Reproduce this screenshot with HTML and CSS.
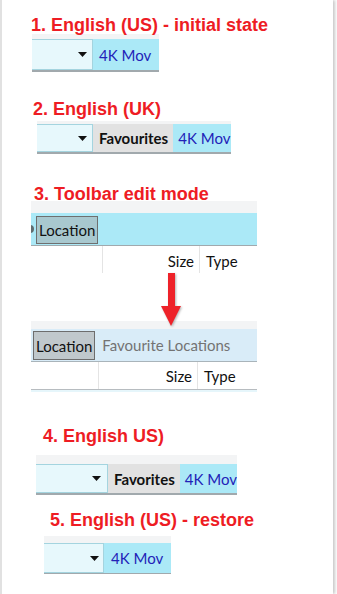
FILE: index.html
```html
<!DOCTYPE html>
<html lang="en">
<head>
    <meta charset="UTF-8">
    <meta name="viewport" content="width=device-width, initial-scale=1.0">
    <title>Toolbar language steps</title>
    <link rel="stylesheet" href="styles.css">
</head>
<body>
    <div class="sheet">
        <section class="step step-1">
            <h2 class="step-title">1. English (US) - initial state</h2>
            <div class="toolbar">
                <div class="band">
                    <div class="combo">
                        <svg class="combo-arrow" width="9" height="5" viewBox="0 0 9 5"><polygon points="0,0 9,0 4.5,5" fill="#111"/></svg>
                    </div>
                    <span class="link">4K Mov</span>
                </div>
            </div>
        </section>

        <section class="step step-2">
            <h2 class="step-title">2. English (UK)</h2>
            <div class="toolbar">
                <div class="band">
                    <div class="combo">
                        <svg class="combo-arrow" width="9" height="5" viewBox="0 0 9 5"><polygon points="0,0 9,0 4.5,5" fill="#111"/></svg>
                    </div>
                    <span class="fav">Favourites</span>
                    <span class="link">4K Mov</span>
                </div>
            </div>
        </section>

        <section class="step step-3">
            <h2 class="step-title">3. Toolbar edit mode</h2>
            <div class="toolbar toolbar-edit">
                <div class="band">
                    <span class="grip"></span>
                    <span class="loc-btn">Location</span>
                </div>
                <div class="cols">
                    <div class="col col-name"></div>
                    <div class="col col-size">Size</div>
                    <div class="col col-type">Type</div>
                </div>
            </div>

            <svg class="arrow" width="22" height="54" viewBox="0 0 22 54">
                <rect x="8" y="0" width="7" height="34" fill="#ee2229"/>
                <polygon points="1,33 21,33 11,53" fill="#ee2229"/>
            </svg>

            <div class="toolbar toolbar-after">
                <div class="band">
                    <span class="loc-btn">Location</span>
                    <span class="fav-loc">Favourite Locations</span>
                </div>
                <div class="cols">
                    <div class="col col-name"></div>
                    <div class="col col-size">Size</div>
                    <div class="col col-type">Type</div>
                </div>
            </div>
        </section>

        <section class="step step-4">
            <h2 class="step-title">4. English US)</h2>
            <div class="toolbar">
                <div class="band">
                    <div class="combo">
                        <svg class="combo-arrow" width="9" height="5" viewBox="0 0 9 5"><polygon points="0,0 9,0 4.5,5" fill="#111"/></svg>
                    </div>
                    <span class="fav">Favorites</span>
                    <span class="link">4K Mov</span>
                </div>
            </div>
        </section>

        <section class="step step-5">
            <h2 class="step-title">5. English (US) - restore</h2>
            <div class="toolbar">
                <div class="band">
                    <div class="combo">
                        <svg class="combo-arrow" width="9" height="5" viewBox="0 0 9 5"><polygon points="0,0 9,0 4.5,5" fill="#111"/></svg>
                    </div>
                    <span class="link">4K Mov</span>
                </div>
            </div>
        </section>
    </div>
</body>
</html>
```

FILE: styles.css
```css
:root {
    --title-red: #ee1c24;
    --strip-bg: #f3f4f5;
    --band-cyan: #abe9f7;
    --band-pale: #d9ecf8;
    --combo-bg: #e7f8fc;
    --combo-border: #a4d4df;
    --band-border: #a1a9ad;
    --link-blue: #2222b8;
}

* {
    margin: 0;
    padding: 0;
    box-sizing: border-box;
}

body {
    background-color: #fff;
    font-family: Lato, 'Open Sans', sans-serif;
}

.sheet {
    width: 333px;
    height: 594px;
    padding-top: 16px;
    border-left: 2px solid #e1e1e1;
    background-color: #fff;
    box-shadow: 2px 0 3px rgba(0, 0, 0, 0.22);
    overflow: hidden;
}

.step-title {
    font-family: 'Liberation Sans', Arial, sans-serif;
    font-size: 18px;
    font-weight: 700;
    line-height: 18px;
    color: var(--title-red);
    white-space: nowrap;
}

/* toolbar pieces */
.toolbar {
    background-color: var(--strip-bg);
    overflow: hidden;
}

.band {
    display: flex;
    align-items: stretch;
    background-color: var(--band-cyan);
    border-bottom: 2px solid var(--band-border);
    font-size: 15px;
    white-space: nowrap;
}

.band > * {
    flex-shrink: 0;
}

.combo {
    display: flex;
    align-items: center;
    justify-content: flex-end;
    background-color: var(--combo-bg);
    border: 1px solid var(--combo-border);
    border-left: none;
    padding-right: 5px;
}

.combo-arrow {
    display: block;
}

.link {
    display: flex;
    align-items: center;
    padding-left: 5px;
    color: var(--link-blue);
}

.fav {
    display: flex;
    align-items: center;
    padding: 0 5px 0 6px;
    background-color: #e2e2e2;
    font-weight: 700;
    color: #111;
}

.grip {
    width: 8px;
    height: 8px;
    margin: auto 0;
    margin-left: -5px;
    margin-right: 2px;
    border-radius: 50%;
    background-color: #5f6d70;
}

.loc-btn {
    display: flex;
    align-items: center;
    padding: 0 2px;
    border: 1px solid #6f6f6f;
    background-color: #a8c8cf;
    color: #111;
}

.fav-loc {
    display: flex;
    align-items: center;
    padding-left: 7px;
    color: #737373;
}

.cols {
    display: flex;
    height: 27px;
    background-color: #fff;
    font-size: 15px;
    color: #111;
    white-space: nowrap;
}

.col {
    padding-top: 6px;
    border-right: 1px solid #e4e4e4;
}

.col-size {
    text-align: right;
}

.col-type {
    border-right: none;
}

/* step 1 */
.step-1 .step-title { margin-left: 29px; }
.step-1 .toolbar { margin-left: 30px; width: 127px; padding-top: 5px; }
.step-1 .band { height: 33px; }
.step-1 .combo { width: 61px; }
.step-1 .link { padding-left: 6px; }

/* step 2 */
.step-2 { margin-top: 28px; }
.step-2 .step-title { margin-left: 31px; }
.step-2 .toolbar { margin-top: 3px; margin-left: 35px; width: 194px; padding-top: 3px; }
.step-2 .band { height: 30px; }
.step-2 .combo { width: 56px; }

/* step 3 */
.step-3 {
    position: relative;
    margin-top: 31px;
}
.step-3 .step-title { margin-left: 32px; }

.toolbar-edit {
    margin-top: -2px;
    margin-left: 29px;
    width: 226px;
    padding-top: 12px;
}
.toolbar-edit .band {
    height: 33px;
    border-bottom-width: 1px;
}
.toolbar-edit .loc-btn {
    margin: 3px 0 1px;
}
.toolbar-edit .col-name { width: 72px; }
.toolbar-edit .col-size { width: 97px; padding-right: 5px; }
.toolbar-edit .col-type { padding-left: 6px; }

.arrow {
    position: absolute;
    left: 158px;
    top: 88px;
    filter: drop-shadow(1px 1px 1px rgba(0, 0, 0, 0.3));
}

.toolbar-after {
    margin-top: 48px;
    margin-left: 29px;
    width: 226px;
    padding-top: 8px;
}
.toolbar-after .band {
    height: 33px;
    background-color: var(--band-pale);
    border-bottom: 1px solid #a9b4ba;
}
.toolbar-after .loc-btn {
    margin: 2px 0 1px 2px;
    background-color: #c0c8cc;
    border-color: #6d6d6d;
}
.toolbar-after .cols {
    height: 28px;
    border-bottom: 1px solid #b7bcc0;
    box-shadow: 0 2px 0 #e6f6fb;
    margin-bottom: 2px;
}
.toolbar-after .col { padding-top: 5px; }
.toolbar-after .col-name { width: 68px; }
.toolbar-after .col-size { width: 99px; padding-right: 5px; }
.toolbar-after .col-type { padding-left: 6px; }

/* step 4 */
.step-4 { margin-top: 35px; }
.step-4 .step-title { margin-left: 41px; }
.step-4 .toolbar { margin-top: 10px; margin-left: 34px; width: 201px; padding-top: 9px; }
.step-4 .band { height: 31px; }
.step-4 .combo { width: 72px; padding-right: 6px; }

/* step 5 */
.step-5 { margin-top: 16px; }
.step-5 .step-title { margin-left: 48px; }
.step-5 .toolbar { margin-top: 7px; margin-left: 42px; width: 127px; padding-top: 7px; }
.step-5 .band { height: 31px; border-bottom-width: 1px; }
.step-5 .combo { width: 60px; padding-right: 4px; }
.step-5 .link { padding-left: 7px; }
```
